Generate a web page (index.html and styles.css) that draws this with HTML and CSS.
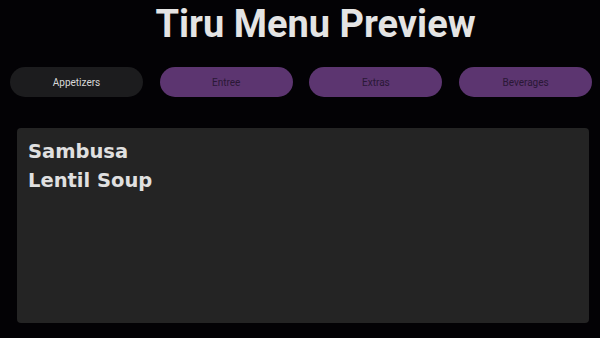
FILE: index.html
```html
<!DOCTYPE html>
<html lang="en">
<head>
  <meta charset="UTF-8" />
  <meta name="viewport" content="width=device-width, initial-scale=1.0" />
  <title>Tiru Menu Preview</title>
  <link rel="stylesheet" href="styles.css">
</head>
<body>
  <h1 class="title">Tiru Menu Preview</h1>
  <div class="tabs">
    <button class="tab active">Appetizers</button>
    <button class="tab">Entree</button>
    <button class="tab">Extras</button>
    <button class="tab">Beverages</button>
  </div>
  <div class="menu">
    <div class="item">Sambusa</div>
    <div class="item">Lentil Soup</div>
  </div>
</body>
</html>
```

FILE: styles.css
```css
body {
  margin: 0;
  background: #030205;
  font-family: "DejaVu Sans", sans-serif;
  height: 338px;
  overflow: hidden;
}
.title {
  margin: 0;
  padding: 3px 0 0 31px;
  text-align: center;
  color: #e4e4e4;
  font-family: Roboto, sans-serif;
  font-size: 38px;
  font-weight: bold;
  line-height: 43px;
}
.tabs {
  display: flex;
  gap: 16.7px;
  padding: 0 7px 0 10px;
  margin-top: 21px;
}
.tab {
  width: 133px;
  height: 30px;
  border: none;
  border-radius: 15px;
  background: #5c3570;
  color: #2a1836;
  font-family: Roboto, sans-serif;
  font-size: 10px;
  padding: 0;
}
.tab.active {
  background: #1c1c1e;
  color: #d8d8d8;
}
.menu {
  margin: 31px 11px 0 17px;
  height: 195px;
  background: #242424;
  border-radius: 4px;
  padding: 9px 11px;
  box-sizing: border-box;
}
.item {
  color: #e0e0e0;
  font-family: "DejaVu Sans", sans-serif;
  font-weight: bold;
  font-size: 19.5px;
  line-height: 29px;
}
```
